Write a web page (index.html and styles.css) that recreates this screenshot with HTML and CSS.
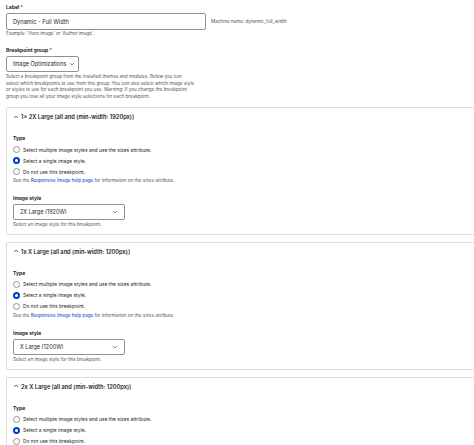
FILE: index.html
```html
<!DOCTYPE html>
<html lang="en">
<head>
  <meta charset="UTF-8" />
  <meta name="viewport" content="width=device-width, initial-scale=1.0">
  <title>Responsive image style</title>
  <link rel="stylesheet" href="styles.css">
</head>
<body>
  <div class="page">
    <div class="form-item">
      <label class="label required">Label</label>
      <div class="inline-row">
        <div class="text-input">Dynamic - Full Width</div>
        <span class="machine-name">Machine name: dynamic_full_width</span>
      </div>
      <p class="description">Example: 'Hero image' or 'Author image'.</p>
    </div>

    <div class="form-item group-item">
      <label class="label required">Breakpoint group</label>
      <div class="select select-group">
        <span>Image Optimizations</span>
        <svg class="chev" viewBox="0 0 6 4" width="6" height="4"><path d="M1 1 L3 3 L5 1" fill="none" stroke="#545560" stroke-width="0.7"/></svg>
      </div>
      <p class="description wide">Select a breakpoint group from the installed themes and modules. Below you can<br>
        select which breakpoints to use from this group. You can also select which image style<br>
        or styles to use for each breakpoint you use. Warning: If you change the breakpoint<br>
        group you lose all your image style selections for each breakpoint.</p>
    </div>

    <div class="details">
      <div class="summary">
        <svg class="summary-chev" viewBox="0 0 6 4" width="6" height="4"><path d="M1 3 L3 1 L5 3" fill="none" stroke="#232429" stroke-width="0.7"/></svg>
        1× 2X Large [all and (min-width: 1920px)]
      </div>
      <div class="details-body">
        <label class="label">Type</label>
        <div class="radio"><span class="dot"></span>Select multiple image styles and use the sizes attribute.</div>
        <div class="radio"><span class="dot checked"></span>Select a single image style.</div>
        <div class="radio"><span class="dot"></span>Do not use this breakpoint.</div>
        <p class="description help">See the <a href="#">Responsive Image help page</a> for information on the sizes attribute.</p>
        <label class="label style-label">Image style</label>
        <div class="select select-style">
          <span>2X Large (1920W)</span>
          <svg class="chev" viewBox="0 0 6 4" width="6" height="4"><path d="M1 1 L3 3 L5 1" fill="none" stroke="#545560" stroke-width="0.7"/></svg>
        </div>
        <p class="description">Select an image style for this breakpoint.</p>
      </div>
    </div>

    <div class="details">
      <div class="summary">
        <svg class="summary-chev" viewBox="0 0 6 4" width="6" height="4"><path d="M1 3 L3 1 L5 3" fill="none" stroke="#232429" stroke-width="0.7"/></svg>
        1x X Large [all and (min-width: 1200px)]
      </div>
      <div class="details-body">
        <label class="label">Type</label>
        <div class="radio"><span class="dot"></span>Select multiple image styles and use the sizes attribute.</div>
        <div class="radio"><span class="dot checked"></span>Select a single image style.</div>
        <div class="radio"><span class="dot"></span>Do not use this breakpoint.</div>
        <p class="description help">See the <a href="#">Responsive Image help page</a> for information on the sizes attribute.</p>
        <label class="label style-label">Image style</label>
        <div class="select select-style">
          <span>X Large (1200W)</span>
          <svg class="chev" viewBox="0 0 6 4" width="6" height="4"><path d="M1 1 L3 3 L5 1" fill="none" stroke="#545560" stroke-width="0.7"/></svg>
        </div>
        <p class="description">Select an image style for this breakpoint.</p>
      </div>
    </div>

    <div class="details">
      <div class="summary">
        <svg class="summary-chev" viewBox="0 0 6 4" width="6" height="4"><path d="M1 3 L3 1 L5 3" fill="none" stroke="#232429" stroke-width="0.7"/></svg>
        2x X Large [all and (min-width: 1200px)]
      </div>
      <div class="details-body">
        <label class="label">Type</label>
        <div class="radio"><span class="dot"></span>Select multiple image styles and use the sizes attribute.</div>
        <div class="radio"><span class="dot checked"></span>Select a single image style.</div>
        <div class="radio"><span class="dot"></span>Do not use this breakpoint.</div>
      </div>
    </div>
  </div>
</body>
</html>
```

FILE: styles.css
```css
html, body {
  margin: 0;
  padding: 0;
  background: #fff;
  overflow: hidden;
}
body {
  font-family: Inter, "Liberation Sans", sans-serif;
  color: #232429;
}
.page {
  padding: 4px 0 0 6px;
  width: 560px;
}
.label {
  display: block;
  font-size: 5px;
  line-height: 6px;
  font-weight: 700;
  margin-bottom: 3px;
}
.required::after {
  content: "*";
  color: #d72222;
  margin-left: 1px;
}
.inline-row {
  display: flex;
  align-items: center;
  gap: 5px;
}
.text-input {
  box-sizing: border-box;
  width: 200px;
  height: 17px;
  border: 1px solid #8e929c;
  border-radius: 2px;
  padding: 0 6px;
  font-size: 5.7px;
  line-height: 15px;
}
.machine-name {
  font-size: 4.6px;
  color: #55565b;
}
.description {
  margin: 1px 0 0;
  font-size: 4.6px;
  line-height: 6.4px;
  color: #55565b;
}
.description.wide {
  margin-top: 2px;
  white-space: nowrap;
}
.group-item {
  margin-top: 10px;
}
.select {
  box-sizing: border-box;
  height: 16px;
  border: 1px solid #8e929c;
  border-radius: 2px;
  padding: 0 6px;
  font-size: 5.5px;
  white-space: nowrap;
  display: flex;
  align-items: center;
  justify-content: space-between;
}
.select-group {
  width: 73px;
}
.select-style {
  width: 112px;
  margin-bottom: 2px;
}
.chev {
  display: block;
  flex-shrink: 0;
  margin-left: 3px;
}
.details {
  margin-top: 7px;
  border: 1px solid #dcdce0;
  border-radius: 2px;
}
.summary {
  display: flex;
  align-items: center;
  gap: 2px;
  padding: 5px 0 6px 6px;
  font-size: 5.7px;
  line-height: 7px;
  font-weight: 600;
}
.summary-chev {
  display: block;
}
.details-body {
  padding: 9px 0 5px 6px;
}
.radio {
  display: flex;
  align-items: center;
  height: 11px;
  font-size: 4.9px;
  color: #232429;
}
.dot {
  box-sizing: border-box;
  width: 7px;
  height: 7px;
  border: 0.7px solid #8e929c;
  border-radius: 50%;
  margin-right: 3px;
}
.dot.checked {
  border: 2.2px solid #003ecc;
  background: #fff;
}
.description.help {
  margin-top: 1px;
}
.description a {
  color: #003ecc;
  text-decoration: none;
}
.style-label {
  margin-top: 11px;
}
```
